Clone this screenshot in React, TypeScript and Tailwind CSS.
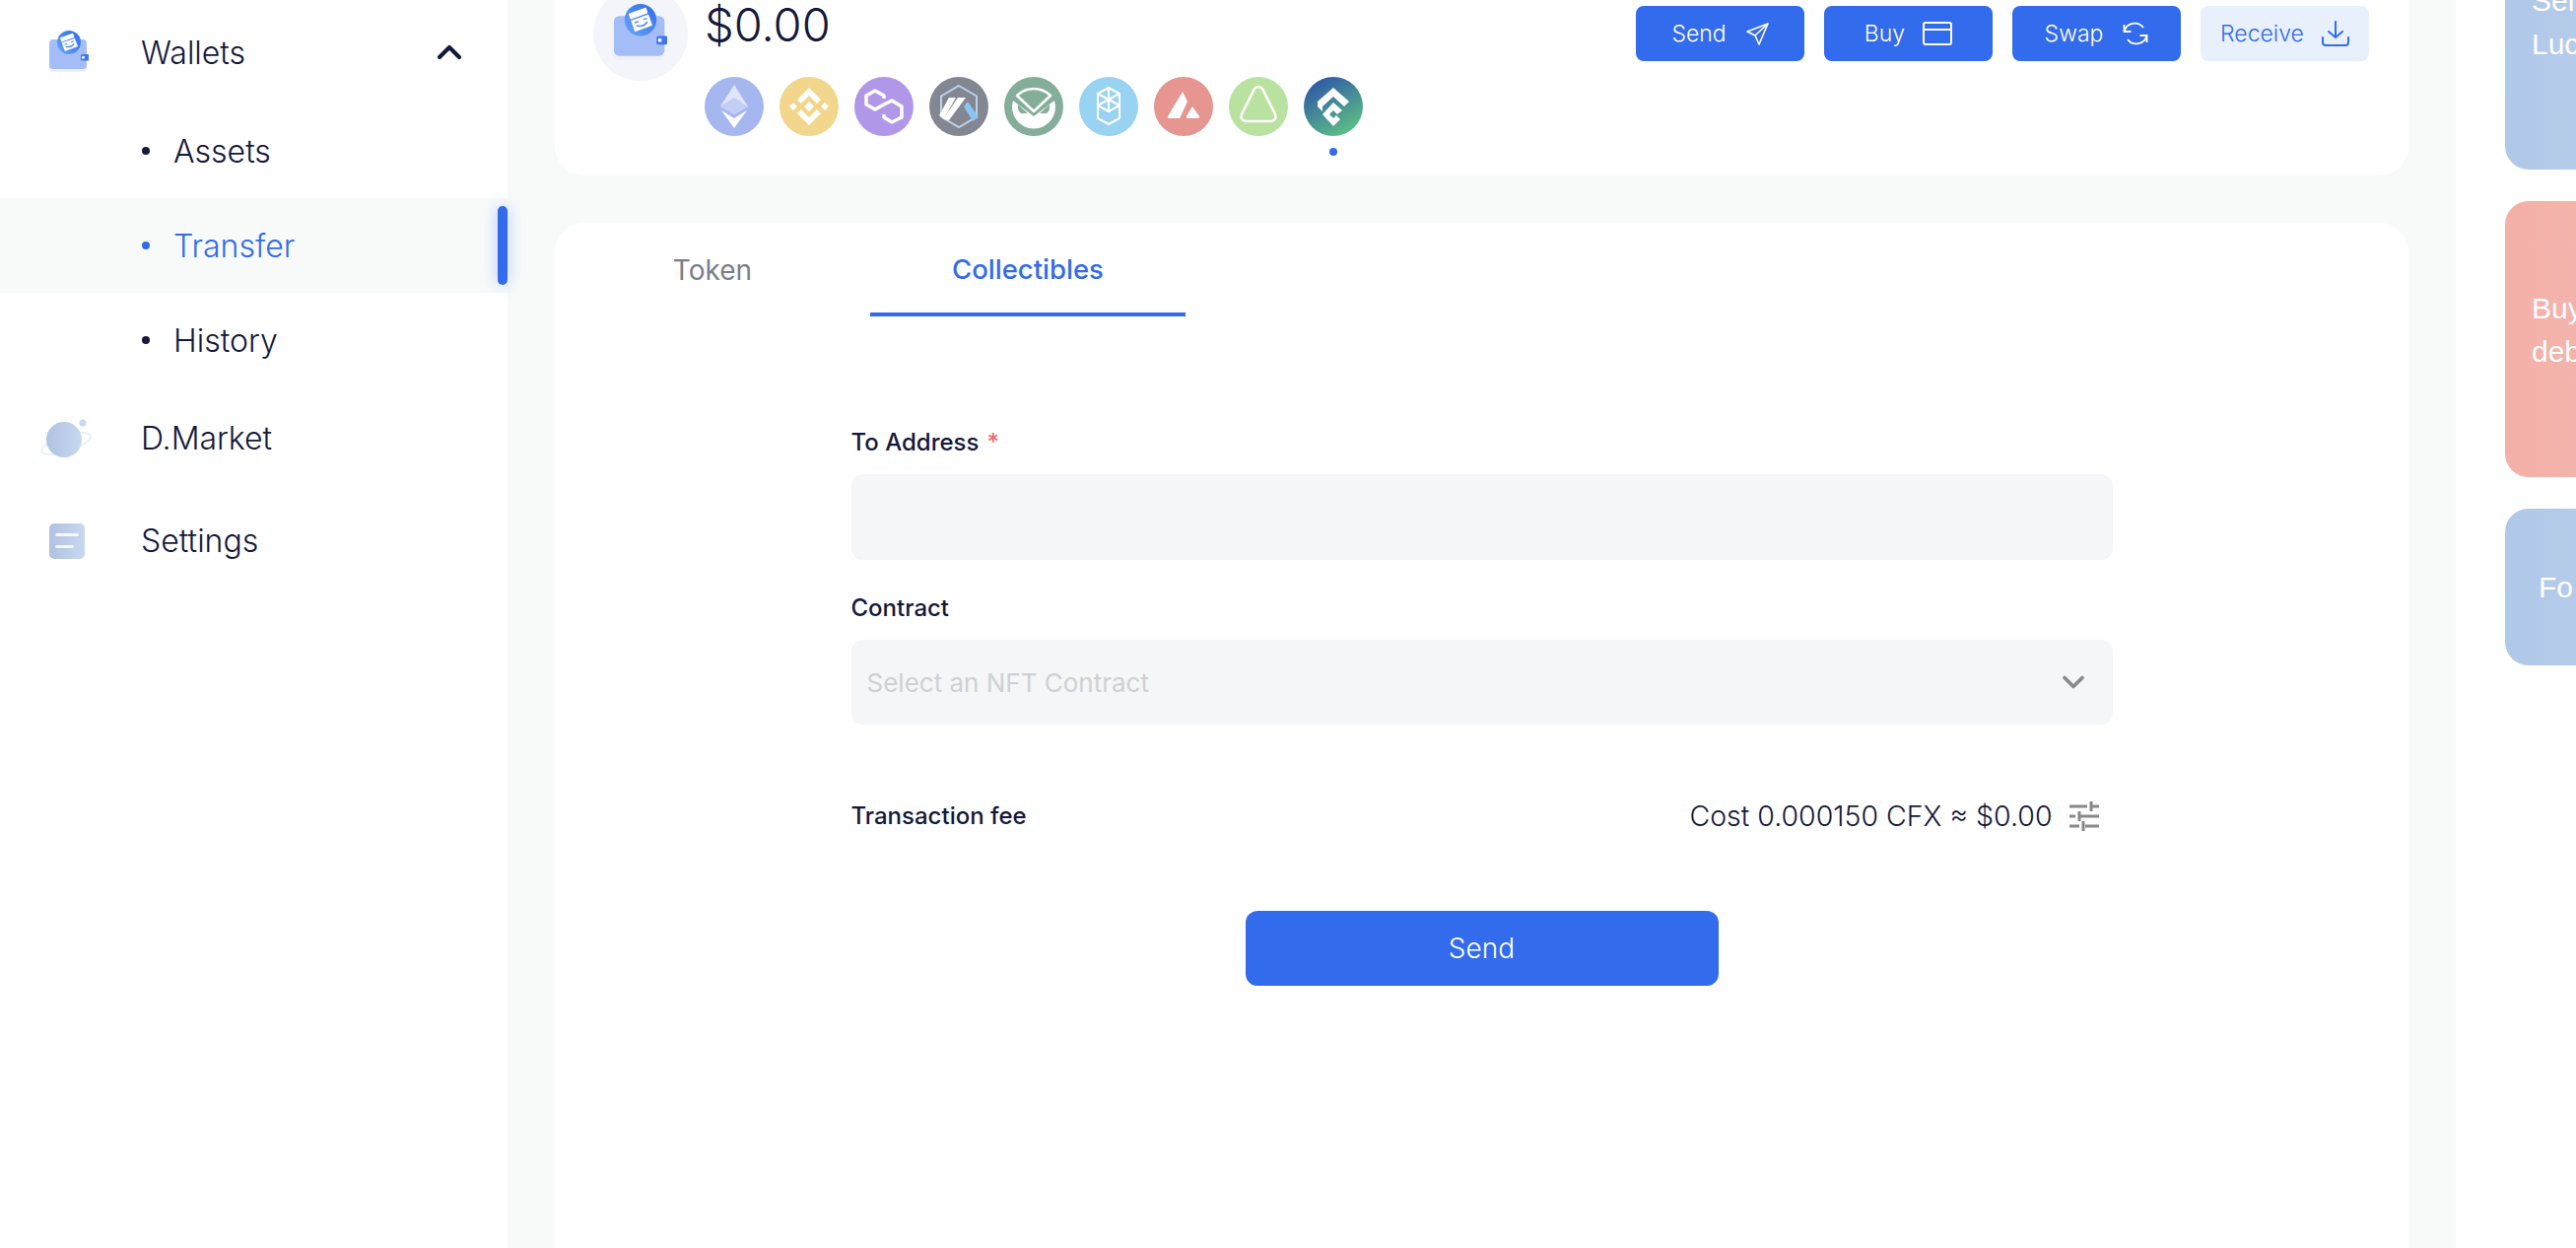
import { ChevronDown, ChevronUp } from 'lucide-react';

const subItems = ['Assets', 'Transfer', 'History'];

function WalletIcon({ size }: { size: number }) {
  return (
    <svg width={size} height={size * 1.1} viewBox="0 0 40 44" className="shrink-0">
      <defs>
        <linearGradient id={`coin${size}`} x1="0" y1="1" x2="1" y2="0">
          <stop offset="0" stopColor="#6aa6f6" />
          <stop offset="1" stopColor="#2f6bea" />
        </linearGradient>
      </defs>
      <rect x="0" y="13" width="38" height="29" rx="4" fill="#eceffa" />
      <rect x="0" y="9" width="38" height="30" rx="4" fill="#a5bdf7" />
      <circle cx="20" cy="12" r="12" fill={`url(#coin${size})`} />
      <g transform="rotate(-20 20 12)">
        <rect x="13" y="4.500" width="14" height="4.500" rx="0.500" fill="#fff" />
        <rect x="13" y="10" width="14" height="9" rx="0.500" fill="#fff" />
        <path d="M15 12.500h3M22 12.500h3" stroke="#4f8bf0" strokeWidth="1" />
        <path d="M15.500 15q4.500 3 9 0" stroke="#4f8bf0" strokeWidth="1.200" fill="none" />
      </g>
      <rect x="32" y="24" width="8.500" height="6.500" rx="1.500" fill="#3f76ee" />
      <circle cx="34.500" cy="27.200" r="1.500" fill="#fff" />
    </svg>
  );
}

function Coin({ children, fill }: { children: React.ReactNode; fill: string }) {
  return (
    <svg width="60" height="60" viewBox="0 0 60 60" className="shrink-0">
      <circle cx="30" cy="30" r="30" fill={fill} />
      {children}
    </svg>
  );
}

function CoinRow() {
  return (
    <div className="mt-[22px] flex gap-4">
      <Coin fill="#a6b7f0">
        <path d="M30 8l14 22-14 8-14-8z" fill="#e0e5fa" />
        <path d="M30 21l14 9-14 8-14-8z" fill="#c3cef5" />
        <path d="M17 34l13 8 13-8-13 18z" fill="#fff" />
      </Coin>
      <Coin fill="#f2d68c">
        <g fill="#fff">
          <path d="M30 11l12 12-4 4-8-8-8 8-4-4z" />
          <path d="M30 49L18 37l4-4 8 8 8-8 4 4z" />
          <path d="M30 25l5 5-5 5-5-5z" />
          <path d="M14 26l4 4-4 4-4-4z" />
          <path d="M46 26l4 4-4 4-4-4z" />
        </g>
      </Coin>
      <Coin fill="#b097e8">
        <path
          d="M30 22v-3l-9-5-9 5v9l9 5 9-5 8-4 10 6v11l-10 5-8-5v-3"
          fill="none"
          stroke="#fff"
          strokeWidth="3.500"
          strokeLinejoin="round"
        />
      </Coin>
      <Coin fill="#828792">
        <path d="M30 9l18 10.500v21L30 51 12 40.500v-21z" fill="none" stroke="#bcd3e8" strokeWidth="2" />
        <path d="M20 21h7L15 42l-5-3z" fill="#fff" />
        <path d="M29 21h8L20 44l-6-1z" fill="#fff" />
        <path d="M39 25l11 16-6 4-9-15z" fill="#8cc4f2" />
      </Coin>
      <Coin fill="#84ae9a">
        <path d="M9 24l21 16 21-16a22 22 0 1 1-42 0z" fill="#fff" />
        <path d="M13 19a24 24 0 0 1 34 0L30 35z" fill="#84ae9a" stroke="#fff" strokeWidth="2.500" strokeLinejoin="round" />
        <path d="M14 28l10 9h-7q-4-3-3-9zM46 28l-10 9h7q4-3 3-9z" fill="#84ae9a" />
      </Coin>
      <Coin fill="#98d3f2">
        <path
          d="M30 11l11 6v25l-11 6-11-6V17zM19 17l22 12M41 17L19 29M30 11v24M19 29l11 6 11-6"
          fill="none"
          stroke="#fff"
          strokeWidth="2"
          strokeLinejoin="round"
        />
      </Coin>
      <Coin fill="#e69590">
        <path d="M29 15l5 10-8 17H15a1.500 1.500 0 0 1-1-2z" fill="#fff" />
        <path d="M39 30l7 10a1.500 1.500 0 0 1-1 2H34a1.500 1.500 0 0 1-1-2z" fill="#fff" />
      </Coin>
      <Coin fill="#b9e2a0">
        <path
          d="M26 12a5 5 0 0 1 8 0l13 26a5 5 0 0 1-4 7H17a5 5 0 0 1-4-7z"
          fill="none"
          stroke="#fff"
          strokeWidth="2.500"
        />
      </Coin>
      <Coin fill="url(#cfx)">
        <defs>
          <linearGradient id="cfx" x1="0.2" y1="0" x2="0.8" y2="1">
            <stop offset="0" stopColor="#2d55a8" />
            <stop offset="1" stopColor="#5fc583" />
          </linearGradient>
        </defs>
        <path d="M30 11l16 14-5 5-11-10-11 10v5l-5-5v-5z" fill="#fff" />
        <path d="M30 26l9 8-5 4-4-4-4 4 4 4 3-3 4 4-7 7-11-12z" fill="#fff" />
      </Coin>
    </div>
  );
}

function ActionButton({ label, icon, gap, light }: { label: string; icon: React.ReactNode; gap: string; light?: boolean }) {
  return (
    <button
      className={`flex h-14 w-[171px] items-center justify-center rounded-lg text-[23px] font-light ${gap} ${
        light ? 'bg-[#e8f0fc] text-[#326bec]' : 'bg-[#326bec] text-white'
      }`}
    >
      {label}
      {icon}
    </button>
  );
}

function SideCard({ lines, color, height, className }: { lines: string[]; color: string; height: string; className: string }) {
  return (
    <div className={`flex w-[200px] shrink-0 flex-col justify-center rounded-3xl font-['Liberation_Sans',sans-serif] text-[30px] leading-[44px] whitespace-nowrap text-white ${color} ${height} ${className}`}>
      {lines.map((line) => (
        <div key={line}>{line}</div>
      ))}
    </div>
  );
}

export default function App() {
  return (
    <div className="flex h-screen overflow-hidden bg-[#f8fafa] font-['Inter',sans-serif] text-[#14183a]">
      {/* Sidebar */}
      <aside className="w-[515px] shrink-0 bg-white pt-px text-[32px] font-[350]">
        <div className="flex h-[104px] items-center pr-[39px] pl-[50px]">
          <WalletIcon size={40} />
          <span className="mt-0.5 ml-[53px] flex-1">Wallets</span>
          <ChevronUp size={40} strokeWidth={2.500} />
        </div>
        {subItems.map((item) => {
          const active = item === 'Transfer';
          return (
            <div
              key={item}
              className={`relative flex h-24 items-center pl-[144px] ${active ? 'bg-[#f8fafa] text-[#326bec]' : ''}`}
            >
              <span className={`h-2 w-2 rounded-full ${active ? 'bg-[#326bec]' : 'bg-[#14183a]'}`} />
              <span className="mt-0.5 ml-6">{item}</span>
              {active && (
                <span className="absolute top-2 right-0 h-20 w-2.5 rounded-full bg-[#326bec] shadow-[0_0_16px_rgba(50,107,236,0.35)]" />
              )}
            </div>
          );
        })}
        <div className="flex h-[104px] items-center pl-[41px]">
          <svg width="52" height="40" viewBox="0 0 52 40">
            <defs>
              <linearGradient id="planet" x1="0" y1="0" x2="1" y2="0">
                <stop offset="0" stopColor="#b0c2e0" />
                <stop offset="1" stopColor="#c8d8f2" />
              </linearGradient>
            </defs>
            <ellipse cx="26" cy="25" rx="26" ry="8" fill="none" stroke="#eaf0f9" strokeWidth="2" transform="rotate(-18 26 25)" />
            <circle cx="24" cy="21" r="18" fill="url(#planet)" />
            <circle cx="43" cy="4" r="3.500" fill="#c8d8f2" />
          </svg>
          <span className="ml-[50px]">D.Market</span>
        </div>
        <div className="flex h-[104px] items-center pl-[50px]">
          <svg width="36" height="36" viewBox="0 0 36 36">
            <rect width="36" height="36" rx="5" fill="url(#planet)" />
            <rect x="6" y="10" width="24" height="3" rx="1.500" fill="#fff" opacity="0.85" />
            <rect x="6" y="22" width="19" height="3" rx="1.500" fill="#fff" opacity="0.85" />
          </svg>
          <span className="ml-[57px]">Settings</span>
        </div>
      </aside>

      {/* Main */}
      <main className="flex min-w-0 flex-1 flex-col gap-12 px-12">
        <section className="flex h-[178px] shrink-0 justify-between rounded-b-[30px] bg-white pr-10 pl-[39px]">
          <div className="flex">
            <div className="-mt-[14px] flex h-24 w-24 items-center justify-center rounded-full bg-[#f4f5fa]">
              <WalletIcon size={54} />
            </div>
            <div className="ml-[17px]">
              <div className="h-14 text-[47px] leading-[50px] font-light">$0.00</div>
              <CoinRow />
              <div className="mt-3 ml-[634px] h-2 w-2 rounded-full bg-[#326bec]" />
            </div>
          </div>
          <div className="mt-1.5 flex gap-5">
            <ActionButton
              label="Send"
              gap="gap-5"
              icon={
                <svg width="23" height="23" viewBox="0 0 23 23" fill="none" stroke="currentColor" strokeWidth="1.600" strokeLinejoin="round">
                  <path d="M22 1L1 9l8 4 4 9zM9 13L22 1" />
                </svg>
              }
            />
            <ActionButton
              label="Buy"
              gap="gap-[18px]"
              icon={
                <svg width="30" height="24" viewBox="0 0 30 24" fill="none" stroke="currentColor" strokeWidth="2">
                  <rect x="1" y="1" width="28" height="22" rx="2" />
                  <path d="M1 8h28" />
                </svg>
              }
            />
            <ActionButton
              label="Swap"
              gap="gap-5"
              icon={
                <svg width="26" height="24" viewBox="0 0 26 24" fill="none" stroke="currentColor" strokeWidth="1.800">
                  <path d="M1.500 3v7h7M1.500 10A11 11 0 0 1 21 6M24.500 21v-7h-7M24.500 14A11 11 0 0 1 5 18" />
                </svg>
              }
            />
            <ActionButton
              label="Receive"
              gap="gap-[18px]"
              light
              icon={
                <svg width="28" height="26" viewBox="0 0 28 26" fill="none" stroke="currentColor" strokeWidth="2" strokeLinecap="round" strokeLinejoin="round">
                  <path d="M14 1v16M7 11l7 6 7-6M1 17v5a3 3 0 0 0 3 3h20a3 3 0 0 0 3-3v-5" />
                </svg>
              }
            />
          </div>
        </section>

        <section className="flex-1 rounded-t-[30px] bg-white">
          <div className="flex">
            <div className="flex h-[95px] w-80 items-center justify-center text-[28px] text-[#7a7e8c]">Token</div>
            <div className="flex h-[95px] w-80 items-center justify-center border-b-4 border-[#326bec] pt-1 text-[27.500px] font-medium text-[#326bec]">
              Collectibles
            </div>
          </div>

          <div className="mx-auto mt-[111px] w-[1280px]">
            <div className="flex h-[34px] items-center text-[24px] font-medium">
              To Address <span className="ml-2 text-[#f06a6a]">*</span>
            </div>
            <div className="mt-[15px] h-[87px] rounded-xl bg-[#f5f6f8]" />
            <div className="mt-[32px] flex h-[34px] items-center text-[24px] font-medium">Contract</div>
            <div className="mt-[15px] flex h-[86px] items-center justify-between rounded-xl bg-[#f5f6f8] pr-[22px] pl-4 text-[26px] text-[#cfd0d4]">
              Select an NFT Contract
              <ChevronDown size={36} strokeWidth={2.500} className="text-[#8a8a8a]" />
            </div>
            <div className="mt-[72px] flex items-center justify-between pr-[13px]">
              <span className="text-[24px] font-medium">Transaction fee</span>
              <span className="flex items-center gap-4 text-[28.500px] font-light">
                Cost 0.000150 CFX ≈ $0.00
                <svg width="32" height="32" viewBox="0 0 32 32" fill="none" stroke="#888888" strokeWidth="3">
                  <path d="M1 6h18M24 6h7M23 1v10M1 16h6M12 16h19M11 11v10M1 26h10M17 26h14M15 21v10" />
                </svg>
              </span>
            </div>
            <button className="mx-auto mt-[74px] block h-[76px] w-[480px] rounded-xl bg-[#326bec] text-[28px] font-light text-white">
              Send
            </button>
          </div>
        </section>
      </main>

      {/* Right column, cut off by the window */}
      <aside className="flex w-[122px] shrink-0 flex-col gap-8 overflow-hidden bg-white pl-[50px]">
        <SideCard className="-mt-[108px] pb-[18px] pl-[27px]" lines={['Send', 'Lucky']} height="h-[280px]" color="bg-gradient-to-r from-[#b0c8e8] to-[#bcd0ee]" />
        <SideCard className="pb-[18px] pl-[27px]" lines={['Buy', 'debit']} height="h-[280px]" color="bg-gradient-to-r from-[#f3b0a8] to-[#f5bab4]" />
        <SideCard className="pl-[34px]" lines={['Fo']} height="h-[159px]" color="bg-gradient-to-r from-[#b0c8e8] to-[#bcd0ee]" />
      </aside>
    </div>
  );
}
